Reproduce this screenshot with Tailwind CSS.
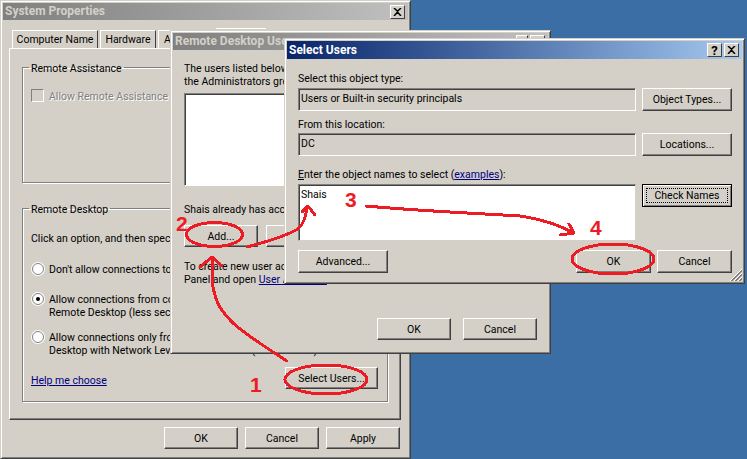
<!doctype html>
<html>
<head>
<meta charset="utf-8">
<script src="https://cdn.jsdelivr.net/npm/@tailwindcss/browser@4"></script>
<title>System Properties</title>
</head>
<body class="m-0 overflow-hidden">
<div class="relative w-[747px] h-[459px] overflow-hidden bg-[#3a6ea5] font-['Roboto',Arial,sans-serif] text-[10.5px] leading-[13px] text-black">

  <!-- System Properties window -->
  <div class="absolute left-0 top-0 w-[411px] h-[459px] p-[2px] bg-[#d4d0c8] border border-t-[#d4d0c8] border-l-[#d4d0c8] border-r-[#404040] border-b-[#404040] shadow-[inset_1px_1px_0_#fff,inset_-1px_-1px_0_#808080]">
    <div class="h-[17px] flex items-center justify-between pl-[2px] pr-[3px] bg-gradient-to-r from-[#808080] to-[#c0c0c0] text-[#d4d0c8] text-[12px] font-bold">
      <span>System Properties</span>
      <button class="w-[15px] h-[14px] flex items-center justify-center bg-[#d4d0c8] border border-t-white border-l-white border-r-[#404040] border-b-[#404040]">
        <svg width="9" height="8" viewBox="0 0 9 8"><path d="M1 0l3.500 3.200L8 0M1 8l3.500-3.800L8 8" stroke="#000" stroke-width="1.500" fill="none"/></svg>
      </button>
    </div>
    <div class="mt-[8px] ml-[9px] h-[20px] flex items-end">
      <div class="h-[18px] w-[86px] flex items-center justify-center border-t border-l border-r border-t-white border-l-white border-r-[#404040]">Computer Name</div>
      <div class="h-[18px] w-[56px] ml-[2px] flex items-center justify-center border-t border-l border-r border-t-white border-l-white border-r-[#404040]">Hardware</div>
      <div class="h-[18px] w-[58px] ml-[2px] px-[5px] flex items-center border-t border-l border-r border-t-white border-l-white border-r-[#404040]">Advanced</div>
      <div class="h-[20px] w-[50px] px-[5px] flex items-center border-t border-t-white">Remote</div>
    </div>
    <div class="ml-[6px] w-[392px] h-[372px] pl-[12px] pt-[12px] border border-t-white border-l-white border-r-[#404040] border-b-[#404040] shadow-[inset_-1px_-1px_0_#808080]">
      <fieldset class="w-[366px] h-[122px] px-[6px] border border-[#808080] shadow-[1px_1px_0_#fff,inset_1px_1px_0_#fff]">
        <legend class="relative top-[1px] px-[2px]">Remote Assistance</legend>
        <div class="mt-[15px] ml-[2px] flex items-start gap-[5px] text-[#808080] [text-shadow:1px_1px_0_#fff]">
          <span class="w-[13px] h-[13px] border border-t-[#808080] border-l-[#808080] border-r-white border-b-white"></span>
          <span class="mt-[1px]">Allow Remote Assistance connections to this computer</span>
        </div>
      </fieldset>
      <fieldset class="mt-[19px] w-[366px] h-[200px] px-[6px] border border-[#808080] shadow-[1px_1px_0_#fff,inset_1px_1px_0_#fff]">
        <legend class="relative top-[1px] px-[2px]">Remote Desktop</legend>
        <div class="ml-[2px] mt-[17px]">Click an option, and then specify who can connect, if needed.</div>
        <div class="ml-[3px] mt-[18px] flex items-start gap-[5px]">
          <span class="w-[12px] h-[12px] rounded-full bg-white border border-[#808080] shadow-[0_0_0_1px_#fff]"></span>
          <span>Don't allow connections to this computer</span>
        </div>
        <div class="ml-[3px] mt-[17px] flex items-start gap-[5px]">
          <span class="w-[12px] h-[12px] flex items-center justify-center rounded-full bg-white border border-[#808080] shadow-[0_0_0_1px_#fff]"><span class="w-[4px] h-[4px] rounded-full bg-black"></span></span>
          <span>Allow connections from computers running any version of<br>Remote Desktop (less secure)</span>
        </div>
        <div class="ml-[3px] mt-[12px] flex items-start gap-[5px]">
          <span class="w-[12px] h-[12px] rounded-full bg-white border border-[#808080] shadow-[0_0_0_1px_#fff]"></span>
          <span>Allow connections only from computers running Remote<br>Desktop with Network Level Authentication (more secure)</span>
        </div>
        <div class="ml-[2px] mt-[10px] pr-[3px] flex items-end justify-between">
          <a class="mb-[2px] text-[#000080] underline">Help me choose</a>
          <button class="w-[93px] h-[22px] bg-[#d4d0c8] border border-t-white border-l-white border-r-[#404040] border-b-[#404040] shadow-[inset_-1px_-1px_0_#808080]">Select Users...</button>
        </div>
      </fieldset>
    </div>
    <div class="mt-[7px] ml-[161px] flex gap-[7px]">
      <button class="w-[74px] h-[22px] border border-t-white border-l-white border-r-[#404040] border-b-[#404040] shadow-[inset_-1px_-1px_0_#808080]">OK</button>
      <button class="w-[74px] h-[22px] border border-t-white border-l-white border-r-[#404040] border-b-[#404040] shadow-[inset_-1px_-1px_0_#808080]">Cancel</button>
      <button class="w-[74px] h-[22px] border border-t-white border-l-white border-r-[#404040] border-b-[#404040] shadow-[inset_-1px_-1px_0_#808080]">Apply</button>
    </div>
  </div>

  <!-- Remote Desktop Users window -->
  <div class="absolute left-[170px] top-[30px] w-[381px] h-[324px] p-[2px] bg-[#d4d0c8] border border-t-[#d4d0c8] border-l-[#d4d0c8] border-r-[#404040] border-b-[#404040] shadow-[inset_1px_1px_0_#fff,inset_-1px_-1px_0_#808080]">
    <div class="h-[17px] flex items-center justify-between pl-[2px] pr-[3px] bg-gradient-to-r from-[#808080] to-[#c0c0c0] text-[#d4d0c8] text-[12px] font-bold">
      <span>Remote Desktop Users</span>
      <div class="flex gap-[2px]">
        <span class="w-[12px] h-[14px] bg-[#d4d0c8] border border-t-white border-l-white border-r-[#404040] border-b-[#404040]"></span>
        <span class="w-[15px] h-[14px] bg-[#d4d0c8] border border-t-white border-l-white border-r-[#404040] border-b-[#404040]"></span>
      </div>
    </div>
    <div class="pl-[11px] pt-[12px]">
      <p>The users listed below can connect to this computer, and any members of<br>the Administrators group can connect even if they are not listed.</p>
      <div class="mt-[5px] w-[354px] h-[93px] bg-white border border-t-[#808080] border-l-[#808080] border-r-white border-b-white shadow-[inset_1px_1px_0_#404040]"></div>
      <p class="mt-[17px]">Shais already has access.</p>
      <div class="mt-[9px] flex gap-[8px]">
        <button class="w-[74px] h-[22px] border border-t-white border-l-white border-r-[#404040] border-b-[#404040] shadow-[inset_-1px_-1px_0_#808080]">Add...</button>
        <button class="w-[74px] h-[22px] border border-t-white border-l-white border-r-[#404040] border-b-[#404040] shadow-[inset_-1px_-1px_0_#808080]">Remove</button>
      </div>
      <p class="mt-[13px]">To create new user accounts or add users to other groups, go to Control<br>Panel and open <a class="text-[#000080] underline">User Accounts</a>.</p>
      <div class="mt-[32px] ml-[193px] flex gap-[12px]">
        <button class="w-[74px] h-[22px] border border-t-white border-l-white border-r-[#404040] border-b-[#404040] shadow-[inset_-1px_-1px_0_#808080]">OK</button>
        <button class="w-[74px] h-[22px] border border-t-white border-l-white border-r-[#404040] border-b-[#404040] shadow-[inset_-1px_-1px_0_#808080]">Cancel</button>
      </div>
    </div>
  </div>

  <!-- Select Users window -->
  <div class="absolute left-[284px] top-[38px] w-[461px] h-[246px] p-[2px] bg-[#d4d0c8] border border-t-[#d4d0c8] border-l-[#d4d0c8] border-r-[#404040] border-b-[#404040] shadow-[inset_1px_1px_0_#fff,inset_-1px_-1px_0_#808080]">
    <div class="h-[18px] flex items-center justify-between pl-[2px] pr-[3px] bg-gradient-to-r from-[#0a246a] to-[#a6caf0] text-white text-[12px] font-bold">
      <span>Select Users</span>
      <div class="flex gap-[2px]">
        <button class="w-[15px] h-[14px] flex items-center justify-center bg-[#d4d0c8] border border-t-white border-l-white border-r-[#404040] border-b-[#404040] text-black text-[13px] font-bold leading-none">?</button>
        <button class="w-[15px] h-[14px] flex items-center justify-center bg-[#d4d0c8] border border-t-white border-l-white border-r-[#404040] border-b-[#404040]">
          <svg width="9" height="8" viewBox="0 0 9 8"><path d="M1 0l3.500 3.200L8 0M1 8l3.500-3.800L8 8" stroke="#000" stroke-width="1.500" fill="none"/></svg>
        </button>
      </div>
    </div>
    <div class="pl-[11px] pt-[13px]">
      <p>Select this object type:</p>
      <div class="mt-[3px] flex gap-[6px]">
        <div class="w-[338px] h-[23px] pl-[2px] pt-[3px] border border-t-[#808080] border-l-[#808080] border-r-white border-b-white shadow-[inset_1px_1px_0_#404040]">Users or Built-in security principals</div>
        <button class="w-[90px] h-[23px] border border-t-white border-l-white border-r-[#404040] border-b-[#404040] shadow-[inset_-1px_-1px_0_#808080]">Object Types...</button>
      </div>
      <p class="mt-[7px]">From this location:</p>
      <div class="mt-[2px] flex gap-[6px]">
        <div class="w-[338px] h-[23px] pl-[2px] pt-[3px] border border-t-[#808080] border-l-[#808080] border-r-white border-b-white shadow-[inset_1px_1px_0_#404040]">DC</div>
        <button class="w-[90px] h-[23px] border border-t-white border-l-white border-r-[#404040] border-b-[#404040] shadow-[inset_-1px_-1px_0_#808080]">Locations...</button>
      </div>
      <p class="mt-[12px]"><span class="underline">E</span>nter the object names to select (<a class="text-[#000080] underline">examples</a>):</p>
      <div class="mt-[3px] flex gap-[6px]">
        <div class="w-[338px] h-[57px] pl-[2px] pt-[3px] bg-white border border-t-[#808080] border-l-[#808080] border-r-[#d4d0c8] border-b-[#d4d0c8] shadow-[inset_1px_1px_0_#404040]">Shais</div>
        <button class="w-[90px] h-[23px] p-[3px] border border-black shadow-[inset_1px_1px_0_#fff,inset_-1px_-1px_0_#808080]">
          <span class="w-full h-full flex items-center justify-center border border-dotted border-black">Check Names</span>
        </button>
      </div>
      <div class="mt-[9px] w-[434px] flex">
        <button class="w-[90px] h-[23px] border border-t-white border-l-white border-r-[#404040] border-b-[#404040] shadow-[inset_-1px_-1px_0_#808080]">Advanced...</button>
        <button class="ml-auto w-[75px] h-[23px] border border-t-white border-l-white border-r-[#404040] border-b-[#404040] shadow-[inset_-1px_-1px_0_#808080]">OK</button>
        <button class="ml-[6px] w-[75px] h-[23px] border border-t-white border-l-white border-r-[#404040] border-b-[#404040] shadow-[inset_-1px_-1px_0_#808080]">Cancel</button>
      </div>
    </div>
    <!-- size grip -->
    <svg class="absolute right-[2px] bottom-[2px]" width="12" height="12" viewBox="0 0 12 12" shape-rendering="crispEdges">
      <path d="M1 12L12 1M5 12l7-7M9 12l3-3" stroke="#808080" stroke-width="1.500" fill="none"/>
      <path d="M0 12L12 0M4 12l8-8M8 12l4-4" stroke="#fff" stroke-width="1" fill="none"/>
    </svg>
  </div>

  <!-- red annotations drawn over the screenshot -->
  <svg class="absolute left-0 top-0 pointer-events-none" width="747" height="459" viewBox="0 0 747 459" fill="none" stroke="#ed1c24" stroke-width="3" stroke-linecap="round" stroke-linejoin="round" shape-rendering="crispEdges">
    <ellipse cx="214.500" cy="234.500" rx="28" ry="12"/>
    <ellipse cx="326" cy="379.500" rx="41" ry="14.500"/>
    <ellipse cx="613" cy="259" rx="41" ry="15"/>
    <path d="M287 361C265 347 246 335 233 323C221 311 216 303 213 287C212 276 212 267 212 258"/>
    <path d="M200 267L212 257L222 266"/>
    <path d="M247 247C265 242 282 238 298 229C304 224 306 216 307 207"/>
    <path d="M302 212L308 206L315 215"/>
    <path d="M366 206C420 211 470 213 520 216C545 220 560 225 573 233"/>
    <path d="M569 224L574 233L560 235"/>
  </svg>
  <span class="absolute left-[176px] top-[213px] font-['Liberation_Sans',Arial,sans-serif] text-[21px] leading-[22px] font-bold text-[#ed1c24]">2</span>
  <span class="absolute left-[250px] top-[374px] font-['Liberation_Sans',Arial,sans-serif] text-[21px] leading-[22px] font-bold text-[#ed1c24]">1</span>
  <span class="absolute left-[345px] top-[189px] font-['Liberation_Sans',Arial,sans-serif] text-[21px] leading-[22px] font-bold text-[#ed1c24]">3</span>
  <span class="absolute left-[590px] top-[217px] font-['Liberation_Sans',Arial,sans-serif] text-[21px] leading-[22px] font-bold text-[#ed1c24]">4</span>
</div>
</body>
</html>
